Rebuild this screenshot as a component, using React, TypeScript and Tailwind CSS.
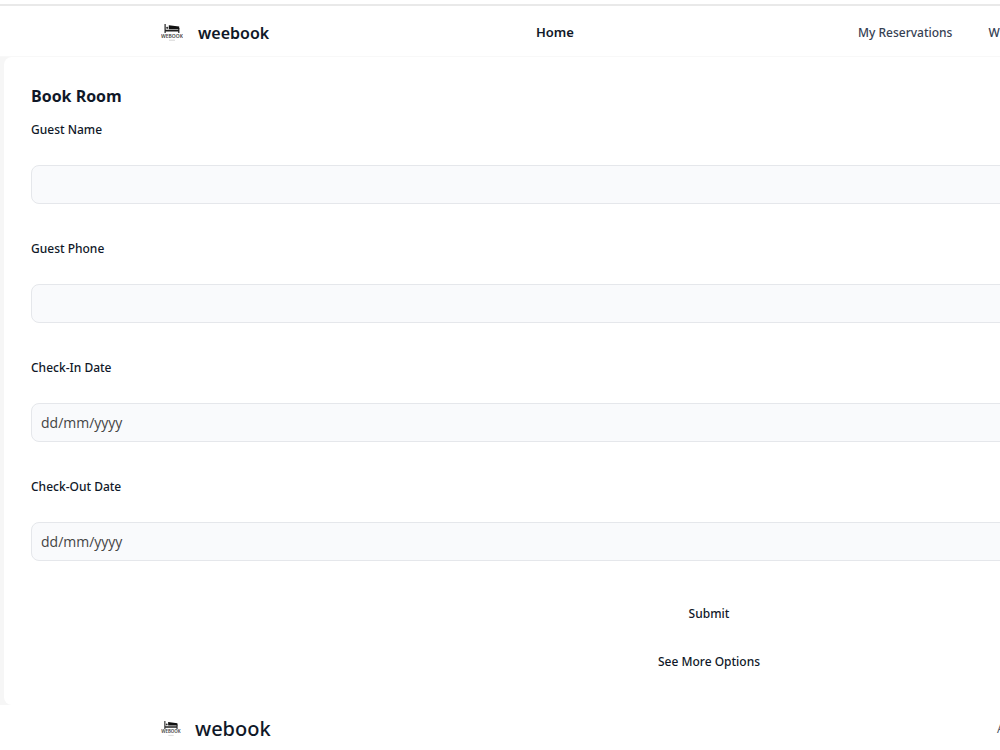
interface Field {
  id: string;
  label: string;
  placeholder?: string;
}

const FIELDS: Field[] = [
  { id: "guest-name", label: "Guest Name" },
  { id: "guest-phone", label: "Guest Phone" },
  { id: "check-in", label: "Check-In Date", placeholder: "dd/mm/yyyy" },
  { id: "check-out", label: "Check-Out Date", placeholder: "dd/mm/yyyy" },
];

function Logo({ className }: { className?: string }) {
  return (
    <svg viewBox="0 0 22 18" className={className} aria-hidden="true">
      {/* Bed */}
      <path d="M3.5 0h1.2v9H3.5z M4.7 5.8h13.6v1.8H4.7z M17.2 4h1.2v5h-1.2z" fill="#222" />
      <path d="M7.8 1.2l10.4 1.4v2.6H7.8z" fill="#111" />
      <circle cx="6.2" cy="3.8" r="1.1" fill="#333" />
      <text
        x="11"
        y="13.8"
        textAnchor="middle"
        fontSize="5"
        fontWeight="600"
        fontFamily="Noto Sans, sans-serif"
        fill="#444"
      >
        WEBOOK
      </text>
      <path d="M8 16.2h6" stroke="#bbb" strokeWidth="0.6" />
    </svg>
  );
}

function FormField({ field }: { field: Field }) {
  return (
    <div className="flex flex-col">
      <label htmlFor={field.id} className="self-start text-[12px] leading-5 font-medium text-gray-900">
        {field.label}
      </label>
      <input
        id={field.id}
        type="text"
        placeholder={field.placeholder}
        className="mt-[25px] h-[39px] w-full rounded-lg border border-gray-200 bg-[#f9fafc] px-[9px] font-['Open_Sans',sans-serif] text-[14px] text-gray-700 placeholder:text-[#444]"
      />
    </div>
  );
}

export default function App() {
  return (
    <div className="min-h-screen overflow-hidden bg-white font-['Noto_Sans',sans-serif] text-gray-900">
      <div className="w-[142%]">
        <header className="mt-1 flex h-[53px] items-center border-t-2 border-b border-t-[#e9e9e9] border-b-[#f8f8f8] pt-[3px] pl-[161px]">
          <div className="flex w-[375px] items-center gap-[15px]">
            <Logo className="h-[18px] w-[22px]" />
            <span className="text-[16px] leading-6 font-semibold">weebook</span>
          </div>
          <nav className="flex flex-1 items-center">
            <a href="#home" className="w-[322px] text-[13px] font-semibold text-gray-900">
              Home
            </a>
            <div className="flex items-center gap-9 text-[12px] font-medium text-gray-700">
              <a href="#reservations">My Reservations</a>
              <a href="#w">W</a>
            </div>
          </nav>
        </header>

        <main className="bg-[#f6f6f6] pr-1.5 pl-1">
          <form className="rounded-lg bg-white px-[27px] pt-[27px] pb-[25px]" onSubmit={(e) => e.preventDefault()}>
            <h1 className="mb-3 font-['Open_Sans',sans-serif] text-[16px] leading-6 font-bold">Book Room</h1>
            <div className="flex flex-col gap-[35px]">
              {FIELDS.map((field) => (
                <FormField key={field.id} field={field} />
              ))}
            </div>
            <div className="mt-[35px] flex flex-col items-center gap-3 text-[12px] font-medium text-gray-900">
              <button type="submit" className="h-9 px-4">
                Submit
              </button>
              <button type="button" className="h-9 px-4">
                See More Options
              </button>
            </div>
          </form>
        </main>

        <footer className="flex h-12 items-center pl-[161px]">
          <div className="flex w-[836px] items-center gap-[14px]">
            <Logo className="h-[16px] w-[20px]" />
            <span className="text-[20px] leading-7 font-medium">webook</span>
          </div>
          <a href="#a" className="text-[12px] text-gray-600">
            A
          </a>
        </footer>
      </div>
    </div>
  );
}
